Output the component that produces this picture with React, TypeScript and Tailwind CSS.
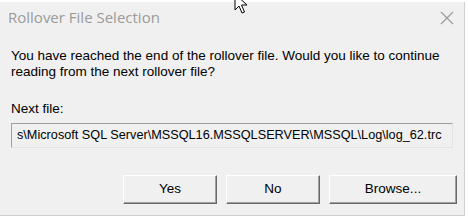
export default function App() {
  return (
    <div className="relative h-[218px] w-[468px] overflow-hidden bg-white pt-[2px] pr-[3px] pb-[2px]">
      <div
        className="flex h-full flex-col border-r border-b border-[#cfcfcf] bg-[#f0f0f0] text-[#000]"
        style={{ fontFamily: '"Liberation Sans", Arial, sans-serif' }}
      >
        {/* title bar */}
        <div className="flex h-[30px] items-center justify-between pl-[8px] pr-[10px]">
          <span
            className="text-[15px] text-[#9a9a9a]"
            style={{ fontFamily: '"Open Sans", "Noto Sans", sans-serif' }}
          >
            Rollover File Selection
          </span>
          <svg width="14" height="14" viewBox="0 0 14 14" className="mt-[1px]">
            <path d="M1 1 L13 13 M13 1 L1 13" stroke="#9a9a9a" strokeWidth="1.2" fill="none" />
          </svg>
        </div>

        <div className="flex flex-1 flex-col px-[11px] pt-[16px]">
          <p className="text-[13.5px] leading-[16px]">
            You have reached the end of the rollover file. Would you like to continue
            <br />
            reading from the next rollover file?
          </p>
          <p className="mt-[21px] text-[13.5px] leading-[16px]">Next file:</p>

          <div className="mt-[6px] flex h-[25px] items-center overflow-hidden whitespace-nowrap border border-t-[#a0a0a0] border-l-[#a0a0a0] border-r-[#e3e3e3] border-b-[#e3e3e3] bg-[#f0f0f0] pl-[5px] text-[12.7px]">
            s\Microsoft SQL Server\MSSQL16.MSSQLSERVER\MSSQL\Log\log_62.trc
          </div>

          <div className="mt-[27px] -mr-[4px] flex justify-end gap-[9px]">
            <WinButton label="Yes" width="w-[94px]" />
            <WinButton label="No" width="w-[94px]" />
            <WinButton label="Browse..." width="w-[128px]" />
          </div>
        </div>
      </div>

      {/* mouse cursor */}
      <svg className="absolute left-[234px] top-[-7px]" width="16" height="22" viewBox="0 0 16 22">
        <path
          d="M1 1 L1 17 L5 13 L8 20 L10.5 19 L7.5 12 L13 12 Z"
          fill="#fff"
          stroke="#000"
          strokeWidth="1"
          strokeLinejoin="round"
        />
      </svg>
    </div>
  )
}

function WinButton({ label, width }: { label: string; width: string }) {
  return (
    <div
      className={`${width} flex h-[29px] items-center justify-center border border-t-white border-l-white border-r-[#696969] border-b-[#696969] bg-[#f0f0f0] text-[13.5px] shadow-[inset_-1px_-1px_0_#a0a0a0]`}
    >
      {label}
    </div>
  )
}
